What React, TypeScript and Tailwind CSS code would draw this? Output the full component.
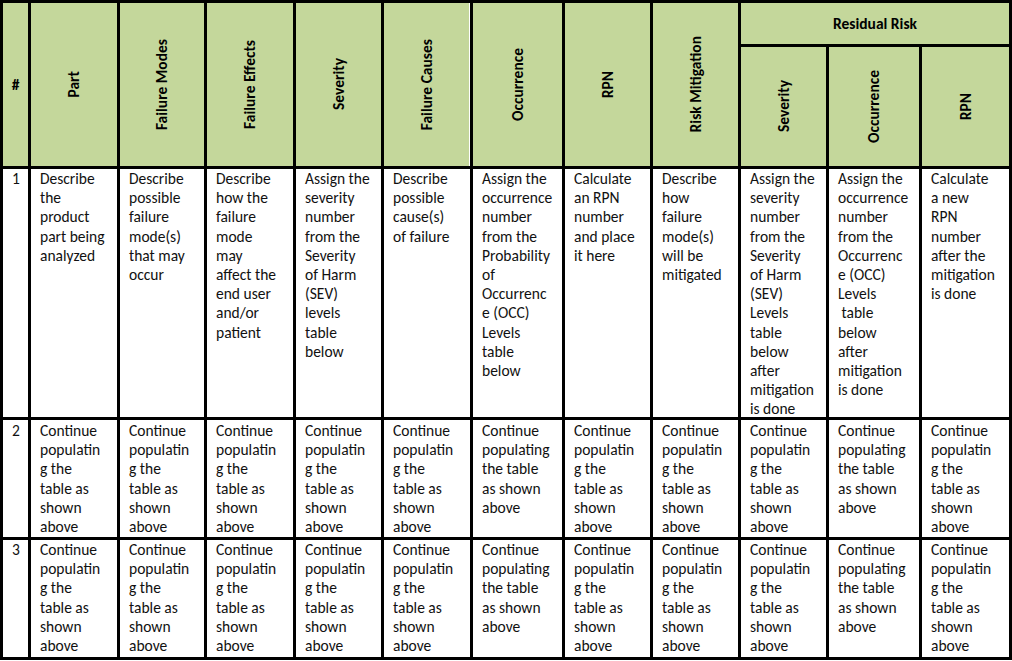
import React from "react";

const FONT = { fontFamily: "Carlito, Lato, 'Liberation Sans', sans-serif" };

type HeadProps = { text: string; extra?: string };

function VHead({ text, extra = "" }: HeadProps) {
  return (
    <div className={`bg-[#c4d79b] flex items-center justify-center row-span-2 ${extra}`}>
      <span className="[writing-mode:vertical-rl] rotate-180 font-bold text-[15.5px] leading-none text-black whitespace-nowrap">
        {text}
      </span>
    </div>
  );
}

function SubHead({ text }: { text: string }) {
  return (
    <div className="bg-[#c4d79b] flex items-center justify-center">
      <span className="[writing-mode:vertical-rl] rotate-180 font-bold text-[15.5px] leading-none text-black whitespace-nowrap">
        {text}
      </span>
    </div>
  );
}

function Cell({ lines, top = "" }: { lines: string[]; top?: string }) {
  return (
    <div className={`bg-white pl-[9px] ${top} text-[15.5px] leading-[19.2px] text-[#111]`}>
      {lines.map((l, i) => (
        <div key={i} className="whitespace-pre">
          {l}
        </div>
      ))}
    </div>
  );
}

const cont = ["Continue", "populatin", "g the", "table as", "shown", "above"];
const contOcc = ["Continue", "populating", "the table", "as shown", "above"];

const row1: string[][] = [
  ["1"],
  ["Describe", "the", "product", "part being", "analyzed"],
  ["Describe", "possible", "failure", "mode(s)", "that may", "occur"],
  ["Describe", "how the", "failure", "mode", "may", "affect the", "end user", "and/or", "patient"],
  ["Assign the", "severity", "number", "from the", "Severity", "of Harm", "(SEV)", "levels", "table", "below"],
  ["Describe", "possible", "cause(s)", "of failure"],
  ["Assign the", "occurrence", "number", "from the", "Probability", "of", "Occurrenc", "e (OCC)", "Levels", "table", "below"],
  ["Calculate", "an RPN", "number", "and place", "it here"],
  ["Describe", "how", "failure", "mode(s)", "will be", "mitigated"],
  ["Assign the", "severity", "number", "from the", "Severity", "of Harm", "(SEV)", "Levels", "table", "below", "after", "mitigation", "is done"],
  ["Assign the", "occurrence", "number", "from the", "Occurrenc", "e (OCC)", "Levels", " table", "below", "after", "mitigation", "is done"],
  ["Calculate", "a new", "RPN", "number", "after the", "mitigation", "is done"],
];

function contRow(n: string): string[][] {
  return [
    [n],
    cont, cont, cont, cont, cont,
    contOcc,
    cont, cont, cont,
    contOcc,
    cont,
  ];
}

export default function App() {
  return (
    <div className="w-[1012px] h-[661px] bg-white" style={FONT}>
      <div className="grid grid-cols-[25px_86px_84px_86px_85px_86px_89px_85px_85px_85px_90px_87px] grid-rows-[41px_119px_248px_117px_117px] gap-[3px] bg-black p-[3px] w-[1012px]">
        <div className="bg-[#c4d79b] row-span-2 flex items-center justify-center font-bold text-[15.5px] text-black">
          #
        </div>
        <VHead text="Part" />
        <VHead text="Failure Modes" />
        <VHead text="Failure Effects" />
        <VHead text="Severity" />
        <VHead text="Failure Causes" extra="shadow-[inset_-1px_0_0_#ffffff]" />
        <VHead text="Occurrence" />
        <VHead text="RPN" />
        <VHead text="Risk Mitigation" />
        <div className="bg-[#c4d79b] col-span-3 flex items-center justify-center font-bold text-[15.5px] text-black">
          Residual Risk
        </div>
        <SubHead text="Severity" />
        <SubHead text="Occurrence" />
        <SubHead text="RPN" />

        {row1.map((c, i) => (
          <Cell key={"r1" + i} lines={c} />
        ))}
        {contRow("2").map((c, i) => (
          <Cell key={"r2" + i} lines={c} top="pt-[1px]" />
        ))}
        {contRow("3").map((c, i) => (
          <Cell key={"r3" + i} lines={c} top="pt-[0px]" />
        ))}
      </div>
    </div>
  );
}
